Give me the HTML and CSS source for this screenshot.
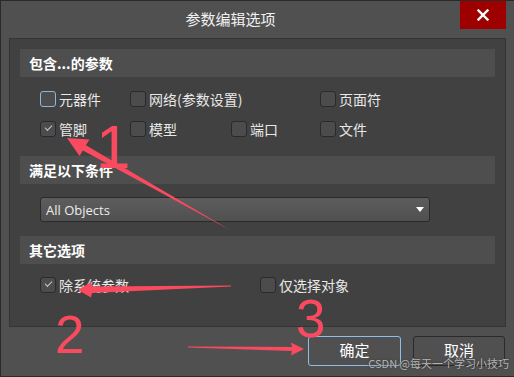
FILE: index.html
```html
<!DOCTYPE html>
<html lang="zh">
<head>
<meta charset="utf-8">
<title>参数编辑选项</title>
<link rel="stylesheet" href="styles.css">
</head>
<body>
<div class="window">
  <div class="titlebar">
    <div class="title">参数编辑选项</div>
    <div class="close">
      <svg width="12" height="12" viewBox="0 0 12 12"><path d="M1.5 1.5L10.5 10.5M10.5 1.5L1.5 10.5" stroke="#fff" stroke-width="2.4" stroke-linecap="square"/></svg>
    </div>
  </div>

  <div class="panel">
    <div class="section">
      <div class="section-head">包含...的参数</div>
      <div class="grid grid-params">
        <label class="opt"><span class="box focus"></span>元器件</label>
        <label class="opt"><span class="box"></span>网络(参数设置)</label>
        <span></span>
        <label class="opt"><span class="box"></span>页面符</label>
        <label class="opt"><span class="box checked"></span>管脚</label>
        <label class="opt"><span class="box"></span>模型</label>
        <label class="opt"><span class="box"></span>端口</label>
        <label class="opt"><span class="box"></span>文件</label>
      </div>
    </div>

    <div class="section">
      <div class="section-head">满足以下条件</div>
      <div class="select-wrap">
        <div class="select">
          <span>All Objects</span>
          <span class="caret"></span>
        </div>
      </div>
    </div>

    <div class="section">
      <div class="section-head">其它选项</div>
      <div class="grid grid-other">
        <label class="opt"><span class="box checked"></span>除系统参数</label>
        <label class="opt"><span class="box"></span>仅选择对象</label>
      </div>
    </div>
  </div>

  <div class="footer">
    <div class="btn primary">确定</div>
    <div class="btn">取消</div>
  </div>

  <div class="watermark">CSDN @每天一个学习小技巧</div>

  <svg class="annot" width="514" height="377" viewBox="0 0 514 377">
    <polygon points="230,230 85.9,145.2 89.5,139.5 67,138 79.5,156 82.9,150.4" />
    <polygon points="231,285.6 92,286.5 91,282 78,290 91,297.5 92,293 231,286.4" />
    <polygon points="188,346.6 292,347 291,342.5 304,349 291,355.5 292,351 188,347.4" />
    <text x="96" y="168" class="num n1">1</text>
    <text x="55" y="353" class="num">2</text>
    <text x="296" y="337" class="num">3</text>
  </svg>
</div>
</body>
</html>
```

FILE: styles.css
```css
* { box-sizing: border-box; }

html, body {
  margin: 0;
  padding: 0;
  background: #505050;
}

body {
  font-family: "Noto Sans CJK SC", "Noto Sans", sans-serif;
  color: #e6e6e6;
}

.window {
  position: relative;
  width: 514px;
  height: 377px;
  background: #505050;
  border: 1px solid #2a2a2a;
  border-right: none;
  display: flex;
  flex-direction: column;
  overflow: hidden;
}

.titlebar {
  display: flex;
  height: 37px;
  padding-right: 8px;
}

.title {
  flex: 1;
  text-align: center;
  font-size: 15px;
  line-height: 20px;
  padding-top: 8px;
  color: #f2f2f2;
}

.close {
  width: 46px;
  height: 28px;
  background: #9e0000;
  display: flex;
  align-items: center;
  justify-content: center;
}

.panel {
  margin: 0 8px;
  height: 289px;
  background: #414141;
  border: 1px solid #353535;
  padding: 10px 10px 0;
  display: flex;
  flex-direction: column;
}

.section-head {
  height: 28px;
  background: #4e4e4e;
  color: #ffffff;
  font-weight: bold;
  font-size: 14px;
  line-height: 28px;
  padding-left: 9px;
}

.grid {
  display: grid;
  row-gap: 14px;
  padding: 14px 0 19px 20px;
}

.grid-params {
  grid-template-columns: 90px 101px 89px auto;
}

.grid-other {
  grid-template-columns: 220px auto;
  padding-top: 13px;
}

.opt {
  display: flex;
  align-items: center;
  gap: 3px;
  height: 16px;
  font-size: 14px;
  line-height: 16px;
  color: #e8e8e8;
  white-space: nowrap;
}

.box {
  width: 16px;
  height: 16px;
  flex: none;
  border: 1px solid #2a2a2a;
  border-radius: 3px;
  background: #4c4c4c;
  position: relative;
}

.box.focus {
  border-color: #8fb6dd;
}

.box.checked::after {
  content: "";
  position: absolute;
  left: 4px;
  top: 3px;
  width: 6px;
  height: 3px;
  border-left: 1px solid #c8c8c8;
  border-bottom: 1px solid #c8c8c8;
  transform: rotate(-45deg);
}

.select-wrap {
  padding: 13px 0 14px 20px;
}

.select {
  width: 390px;
  height: 25px;
  border: 1px solid #2a2a2a;
  border-radius: 3px;
  background: linear-gradient(#5d5d5d, #505050);
  display: flex;
  align-items: center;
  justify-content: space-between;
  padding: 0 3px 0 5px;
  font-family: "Open Sans", "Noto Sans", sans-serif;
  font-size: 13px;
  color: #ececec;
}

.caret {
  width: 0;
  height: 0;
  border-left: 4.5px solid transparent;
  border-right: 4.5px solid transparent;
  border-top: 5px solid #ffffff;
  margin-right: 2px;
}

.footer {
  display: flex;
  justify-content: flex-end;
  gap: 12px;
  padding: 9px 9px 0 0;
}

.btn {
  width: 92px;
  height: 30px;
  border: 1px solid #2a2a2a;
  border-radius: 3px;
  background: #505050;
  color: #ffffff;
  font-size: 15px;
  line-height: 20px;
  padding-bottom: 2px;
  display: flex;
  align-items: center;
  justify-content: center;
}

.btn.primary {
  width: 93px;
  border-color: #8fbde8;
}

.watermark {
  position: absolute;
  right: 5px;
  bottom: 6px;
  font-size: 11px;
  line-height: 14px;
  color: #b4b4b4;
  text-shadow: 0 0 2px #333;
  font-family: "Noto Sans CJK SC", "Noto Sans", sans-serif;
}

.annot {
  position: absolute;
  left: -1px;
  top: -1px;
  pointer-events: none;
}

.annot polygon {
  fill: #f94a60;
}

.num {
  font-family: "Liberation Sans", sans-serif;
  font-size: 53px;
  fill: #f94a60;
}

.num.n1 {
  font-size: 62px;
}
```
